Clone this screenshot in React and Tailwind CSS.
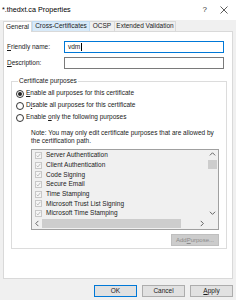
import React from 'react';

const font = { fontFamily: '"Liberation Sans", Arial, sans-serif' };

function Radio({ checked, children }) {
  return (
    <div className="flex items-center h-[12px]">
      <span className="w-[8px] h-[8px] rounded-full border border-[#333] flex items-center justify-center bg-white">
        {checked && <span className="w-[4px] h-[4px] rounded-full bg-[#222]" />}
      </span>
      <span className="ml-[2px]">{children}</span>
    </div>
  );
}

const purposes = [
  'Server Authentication',
  'Client Authentication',
  'Code Signing',
  'Secure Email',
  'Time Stamping',
  'Microsoft Trust List Signing',
  'Microsoft Time Stamping',
];

function Chevron({ dir }) {
  const d = {
    up: 'M1 5 L4 2 L7 5',
    down: 'M1 2 L4 5 L7 2',
    left: 'M5 1 L2 4 L5 7',
    right: 'M2 1 L5 4 L2 7',
  }[dir];
  return (
    <svg width="7" height="7" viewBox="0 0 8 8" fill="none" stroke="#606060" strokeWidth="1.1">
      <path d={d} />
    </svg>
  );
}

function Button({ children, primary }) {
  return (
    <div
      className={
        'w-[43px] h-[12px] flex items-center justify-center bg-[#e1e1e1] border ' +
        (primary ? 'border-[#0078d7]' : 'border-[#adadad]')
      }
    >
      {children}
    </div>
  );
}

export default function App() {
  return (
    <div className="w-[236px] h-[300px] bg-[#f0f0f0] flex flex-col text-[6.5px] text-[#1a1a1a] leading-none overflow-hidden" style={font}>
      {/* title bar */}
      <div className="h-[20px] bg-white flex items-center pl-[2px] pr-[8px] shrink-0">
        <span className="text-[7.2px] text-black">*.thedxt.ca Properties</span>
        <span className="ml-auto text-[8px] text-[#333]">?</span>
        <svg className="ml-[13px]" width="8" height="8" viewBox="0 0 8 8" stroke="#333" strokeWidth="0.8">
          <path d="M0.5 0.5 L7.5 7.5 M7.5 0.5 L0.5 7.5" />
        </svg>
      </div>

      {/* tabs */}
      <div className="flex h-[11px] pl-[3px] items-end shrink-0">
        <div className="h-[11px] w-[29px] bg-white border border-b-0 border-[#d9d9d9] flex items-center justify-center z-10 -mb-[1px]">
          General
        </div>
        <div className="h-[10px] w-[58px] bg-[#d8eaf9] border border-b-0 border-[#c0dcf3] flex items-center justify-center whitespace-nowrap">
          Cross-Certificates
        </div>
        <div className="h-[10px] w-[25px] bg-[#f0f0f0] border border-b-0 border-l-0 border-[#d9d9d9] flex items-center justify-center">
          OCSP
        </div>
        <div className="h-[10px] w-[61px] bg-[#f0f0f0] border border-b-0 border-l-0 border-[#d9d9d9] flex items-center justify-center whitespace-nowrap">
          Extended Validation
        </div>
      </div>

      {/* panel */}
      <div className="ml-[3px] w-[230px] h-[248px] bg-white border border-[#d9d9d9] shrink-0 flex flex-col">
        <div className="flex items-center mt-[9px] h-[12px]">
          <span className="ml-[3px] w-[57px]"><u>F</u>riendly name:</span>
          <div className="w-[160px] h-[12px] border border-[#0078d7] flex items-center pl-[3px]">
            vdm<span className="w-px h-[8px] bg-black ml-[0.5px]" />
          </div>
        </div>
        <div className="flex items-center mt-[4px] h-[12px]">
          <span className="ml-[3px] w-[57px]"><u>D</u>escription:</span>
          <div className="w-[160px] h-[12px] border border-[#7a7a7a]" />
        </div>

        <fieldset className="ml-[7px] w-[216px] h-[171px] mt-[9px] border border-[#dcdcdc] px-[4px] pt-[3px]">
          <legend className="ml-[2px] px-[1px] text-[#1a1a1a]">Certificate purposes</legend>
          <div className="flex flex-col">
            <Radio checked><u>E</u>nable all purposes for this certificate</Radio>
            <Radio>D<u>i</u>sable all purposes for this certificate</Radio>
            <Radio>Enable <u>o</u>nly the following purposes</Radio>
          </div>
          <div className="ml-[15px] mt-[5px] leading-[8.5px] w-[186px]">
            Note: You may only edit certificate purposes that are allowed by the certification path.
          </div>
          <div className="ml-[15px] mt-[3px] w-[188px] h-[81px] border border-[#a0a0a0] bg-[#f0f0f0] flex flex-col">
            <div className="flex flex-1 min-h-0">
              <div className="flex-1 flex flex-col pt-[1px] pl-[3px]">
                {purposes.map((p) => (
                  <div key={p} className="h-[10px] flex items-center text-[#222]">
                    <span className="w-[7px] h-[7px] border border-[#c8c8c8] bg-[#f5f5f5] flex items-center justify-center">
                      <svg width="5" height="5" viewBox="0 0 6 6" fill="none" stroke="#a8a8a8" strokeWidth="0.9">
                        <path d="M0.8 3.2 L2.3 4.7 L5.2 1" />
                      </svg>
                    </span>
                    <span className="ml-[4px]">{p}</span>
                  </div>
                ))}
              </div>
              <div className="w-[11px] flex flex-col items-center bg-[#f0f0f0]">
                <div className="h-[10px] flex items-center justify-center"><Chevron dir="up" /></div>
                <div className="w-[9px] h-[9px] bg-[#cdcdcd]" />
                <div className="flex-1" />
                <div className="h-[10px] flex items-center justify-center"><Chevron dir="down" /></div>
              </div>
            </div>
            <div className="h-[10px] flex items-center shrink-0">
              <div className="w-[10px] flex items-center justify-center"><Chevron dir="left" /></div>
              <div className="w-[139px] h-[9px] bg-[#cdcdcd]" />
              <div className="flex-1" />
              <div className="w-[10px] flex items-center justify-center"><Chevron dir="right" /></div>
              <div className="w-[11px]" />
            </div>
          </div>
          <div className="flex justify-end mr-[3px] mt-[4px]">
            <div className="w-[48px] h-[12px] bg-[#cccccc] border border-[#bfbfbf] flex items-center justify-center text-[#8a8a8a] text-[6px] whitespace-nowrap">
              Add <u>P</u>urpose...
            </div>
          </div>
        </fieldset>
      </div>

      {/* buttons */}
      <div className="flex justify-end gap-[5px] pr-[3px] mt-[6px]">
        <Button primary>OK</Button>
        <Button>Cancel</Button>
        <Button><u>A</u>pply</Button>
      </div>
    </div>
  );
}
